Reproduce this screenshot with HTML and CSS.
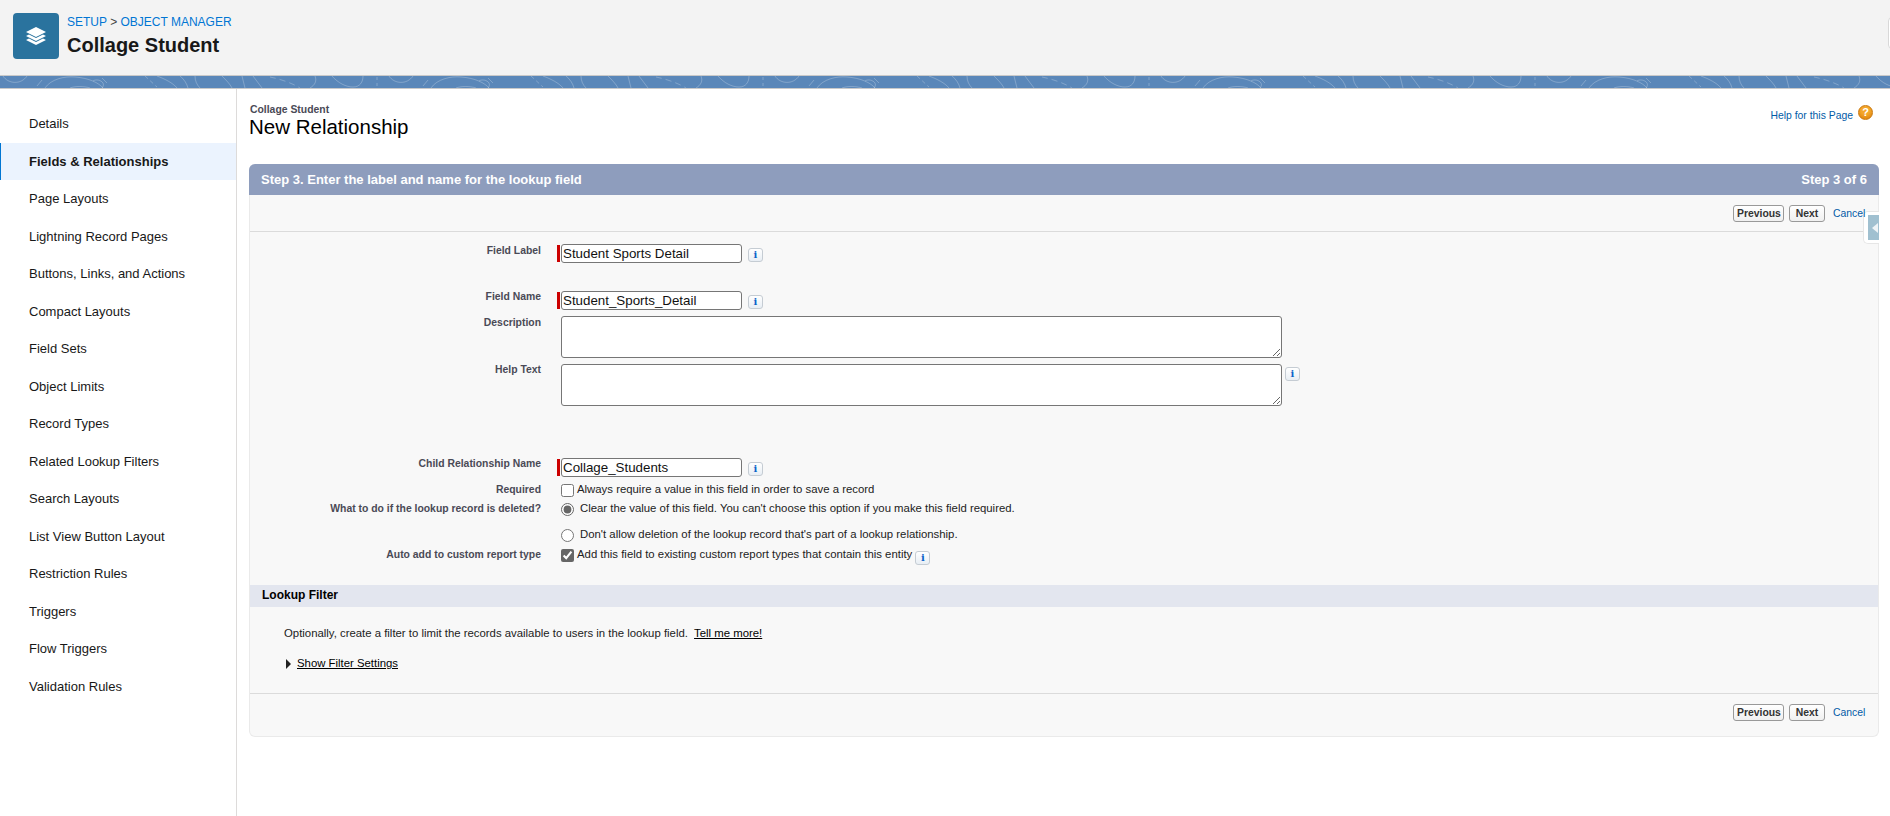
FILE: index.html
```html
<!DOCTYPE html>
<html lang="en">
<head>
<meta charset="utf-8">
<title>New Relationship</title>
<link rel="stylesheet" href="styles.css">
</head>
<body>
<header class="app-header">
  <div class="app-icon">
    <svg viewBox="0 0 20 18" width="20" height="18"><path fill="#fff" d="M10 0 L20 5 L10 10 L0 5 Z"/><path fill="#fff" d="M3 7.4 L0 9 L10 14 L20 9 L17 7.4 L10 11 Z"/><path fill="#fff" d="M3 11.4 L0 13 L10 18 L20 13 L17 11.4 L10 15 Z"/></svg>
  </div>
  <div class="app-titles">
    <div class="crumbs"><a>SETUP</a> &gt; <a>OBJECT MANAGER</a></div>
    <div class="app-title">Collage Student</div>
  </div>
  <div class="header-stub"></div>
</header>
<div class="banner">
  <svg class="banner-art" width="1890" height="12">
    <defs>
      <pattern id="swirl" width="386" height="12" patternUnits="userSpaceOnUse">
        <g fill="none" stroke="#fff" stroke-opacity=".24">
          <path d="M3 0c5 8 18 9 24 0"/>
          <path d="M37 10l5-6"/>
          <path d="M45 12c6-9 20-12 30-11 14 1 24 6 28 11"/>
          <path d="M70 12c5-2 14-2 20 0M93 5c3-2 8-1 10 2 1 2 0 4-1 5"/>
          <path d="M102 2l5 5"/>
          <path d="M145 0l12 11" stroke-dasharray="4 3"/>
          <path d="M157 0c8 3 16 7 20 12"/>
          <path d="M180 0c4 3 7 8 8 12"/>
          <path d="M195 0c0 5 2 9 5 12"/>
          <path d="M222 0c4 4 8 8 10 12"/>
          <path d="M242 0c1 4 2 8 3 12"/>
          <path d="M253 0l9 12"/>
          <path d="M270 1c10 2 22 6 30 11" stroke-dasharray="6 4"/>
          <path d="M315 0c2 5 0 9-5 12"/>
          <path d="M332 0c6 7 14 11 21 11 7 0 10-5 10-11"/>
          <path d="M377 1v11" stroke-dasharray="3 3"/>
        </g>
      </pattern>
    </defs>
    <rect width="1890" height="12" fill="url(#swirl)"/>
  </svg>
</div>
<div class="layout">
  <nav class="sidebar">
    <a class="nav-item">Details</a>
    <a class="nav-item nav-active">Fields &amp; Relationships</a>
    <a class="nav-item">Page Layouts</a>
    <a class="nav-item">Lightning Record Pages</a>
    <a class="nav-item">Buttons, Links, and Actions</a>
    <a class="nav-item">Compact Layouts</a>
    <a class="nav-item">Field Sets</a>
    <a class="nav-item">Object Limits</a>
    <a class="nav-item">Record Types</a>
    <a class="nav-item">Related Lookup Filters</a>
    <a class="nav-item">Search Layouts</a>
    <a class="nav-item">List View Button Layout</a>
    <a class="nav-item">Restriction Rules</a>
    <a class="nav-item">Triggers</a>
    <a class="nav-item">Flow Triggers</a>
    <a class="nav-item">Validation Rules</a>
  </nav>
  <main class="content">
    <div class="page-head">
      <div>
        <div class="page-sub">Collage Student</div>
        <h1 class="page-title">New Relationship</h1>
      </div>
      <a class="help-link">Help for this Page <span class="help-icon">?</span></a>
    </div>
    <section class="panel">
      <div class="panel-head"><span>Step 3. Enter the label and name for the lookup field</span><span>Step 3 of 6</span></div>
      <div class="btn-row btn-row-top">
        <button class="btn">Previous</button><button class="btn">Next</button><a class="cancel">Cancel</a>
        <div class="side-tab"><span class="side-tab-inner"><span class="side-tab-arrow"></span></span></div>
      </div>
      <div class="form">
        <div class="row row-label">
          <div class="lbl lbl-low">Field Label</div>
          <div class="val"><span class="req"></span><input class="inp" type="text" value="Student Sports Detail"><span class="info">i</span></div>
        </div>
        <div class="row row-name">
          <div class="lbl">Field Name</div>
          <div class="val"><span class="req"></span><input class="inp" type="text" value="Student_Sports_Detail"><span class="info">i</span></div>
        </div>
        <div class="row row-desc">
          <div class="lbl lbl-low">Description</div>
          <div class="val"><textarea class="area"></textarea></div>
        </div>
        <div class="row row-help">
          <div class="lbl">Help Text</div>
          <div class="val"><textarea class="area"></textarea><span class="info info-area">i</span></div>
        </div>
        <div class="row row-child">
          <div class="lbl">Child Relationship Name</div>
          <div class="val"><span class="req"></span><input class="inp" type="text" value="Collage_Students"><span class="info">i</span></div>
        </div>
        <div class="row row-required">
          <div class="lbl">Required</div>
          <div class="val val-opt"><input class="chk" type="checkbox"><span class="opt opt-chk">Always require a value in this field in order to save a record</span></div>
        </div>
        <div class="row row-what">
          <div class="lbl">What to do if the lookup record is deleted?</div>
          <div class="val val-opt"><input class="rad" type="radio" name="del" checked><span class="opt">Clear the value of this field. You can't choose this option if you make this field required.</span></div>
        </div>
        <div class="row row-dont">
          <div class="lbl"></div>
          <div class="val val-opt"><input class="rad" type="radio" name="del"><span class="opt">Don't allow deletion of the lookup record that's part of a lookup relationship.</span></div>
        </div>
        <div class="row row-auto">
          <div class="lbl">Auto add to custom report type</div>
          <div class="val val-opt"><input class="chk" type="checkbox" checked><span class="opt opt-chk">Add this field to existing custom report types that contain this entity</span><span class="info info-auto">i</span></div>
        </div>
      </div>
      <h3 class="sub-head">Lookup Filter</h3>
      <div class="filter">
        <p class="filter-note">Optionally, create a filter to limit the records available to users in the lookup field. <a class="ul-link tell">Tell me more!</a></p>
        <div class="filter-toggle"><span class="tri"></span><a class="ul-link">Show Filter Settings</a></div>
      </div>
      <div class="btn-row btn-row-bottom">
        <button class="btn">Previous</button><button class="btn">Next</button><a class="cancel">Cancel</a>
      </div>
    </section>
  </main>
</div>
</body>
</html>
```
FILE: styles.css
```css
* { box-sizing: border-box; }
html, body { margin: 0; height: 100%; overflow: hidden; }
body { font-family: "Liberation Sans", Arial, sans-serif; background: #fff; color: #181818; }
a { text-decoration: none; }

.app-header { position: relative; height: 76px; background: #f3f3f3; border-bottom: 1px solid #c9c9c9; display: flex; align-items: flex-start; padding: 13px 0 0 13px; }
.app-icon { width: 46px; height: 46px; background: #2a739e; border-radius: 4px; display: flex; align-items: center; justify-content: center; }
.app-titles { margin-left: 8px; }
.crumbs { font-size: 12px; line-height: 18px; color: #444; }
.crumbs a { color: #0176d3; }
.app-title { font-size: 20px; font-weight: 700; line-height: 28px; color: #181818; }
.header-stub { position: absolute; left: 1888px; top: 17px; width: 20px; height: 32px; background: #fff; border: 1px solid #d8d8d8; border-radius: 4px; }

.banner { height: 13px; background: #5a87b9; border-bottom: 1px solid #c9c9c9; overflow: hidden; }
.banner-art { display: block; }

.layout { display: flex; height: 727px; }
.sidebar { width: 237px; flex: none; border-right: 1px solid #dddbda; padding-top: 16px; }
.nav-item { display: flex; align-items: center; height: 37.53px; padding-left: 29px; font-size: 13px; color: #181818; }
.nav-active { background: #ebf3fe; font-weight: 700; box-shadow: inset 1px 0 0 #0176d3; }

.content { flex: 1; padding: 0 11px 0 12px; min-width: 0; }
.page-head { height: 75px; display: flex; justify-content: space-between; align-items: flex-start; padding-top: 15px; }
.page-sub { font-size: 10.4px; font-weight: 700; line-height: 12px; color: #4a4a56; padding-left: 1px; }
.page-title { margin: -1px 0 0; font-size: 20.5px; font-weight: 400; line-height: 24px; color: #000; }
.help-link { font-size: 10.4px; color: #015ba7; display: flex; align-items: center; gap: 5px; margin-right: 6px; line-height: 16px; margin-top: 4px; }
.help-icon { width: 15px; height: 15px; border-radius: 50%; background: radial-gradient(circle at 50% 30%, #f4a62a 40%, #d97a06); border: 1px solid #c9780f; color: #fff; font-size: 11px; font-weight: 700; line-height: 13px; text-align: center; margin-top: -7px; }

.panel { position: relative; background: #f8f8f8; border: 1px solid #eaeaea; border-top: 0; border-radius: 6px; height: 573px; }
.panel-head { height: 31px; margin: 0 -1px; background: #8e9dbd; color: #fff; border-radius: 6px 6px 0 0; display: flex; align-items: center; justify-content: space-between; padding: 0 12px; font-size: 13px; font-weight: 700; }

.btn-row { display: flex; align-items: center; justify-content: flex-end; padding-right: 13px; }
.btn-row-top { position: relative; height: 37px; border-bottom: 1px solid #dbdbdb; }
.btn-row-bottom { height: 44px; border-top: 1px solid #dbdbdb; padding-bottom: 6px; }
.btn { height: 17px; padding: 0 3px; margin: 0 0 0 5px; font: 700 10.4px "Liberation Sans", Arial, sans-serif; color: #333; background: linear-gradient(#fff, #f0f0f0); border: 1px solid #999; border-radius: 3px; line-height: 15px; }
.btn:nth-of-type(1) { width: 51px; }
.btn:nth-of-type(2) { width: 36px; }
.cancel { position: relative; z-index: 1; font-size: 10.4px; color: #015ba7; margin-left: 8px; width: 32px; }
.side-tab { position: absolute; right: -1px; top: 16px; width: 16px; height: 33px; background: #fff; border: 1px solid #e6e6e6; border-right: 0; border-radius: 5px 0 0 5px; display: flex; align-items: center; justify-content: flex-end; }
.side-tab-inner { width: 11px; height: 25px; background: #a0c0d0; display: flex; align-items: center; padding-left: 4px; }
.side-tab-arrow { border: 5px solid transparent; border-right: 6px solid #eef3f6; border-left: 0; }

.form { height: 353px; padding-top: 12px; }
.row { display: flex; align-items: flex-start; }
.lbl { width: 291px; flex: none; text-align: right; font-size: 10.4px; font-weight: 700; line-height: 12px; color: #4a4a56; }
.lbl-low { margin-top: 1px; }
.val { position: relative; margin-left: 20px; display: flex; align-items: flex-start; }
.inp { width: 181px; height: 19px; padding: 0 1px; font: 13.33px "Liberation Sans", Arial, sans-serif; color: #111; background: #fff; border: 1px solid #767676; border-radius: 3px; outline: 0; }
.req { position: absolute; left: -4px; top: 1px; width: 3px; height: 17px; background: #c00; }
.area { display: block; width: 721px; height: 42px; margin: 0; background: #fff; border: 1px solid #767676; border-radius: 3px; resize: both; }
.info { width: 15px; height: 14px; margin: 4px 0 0 6px; background: linear-gradient(#fff, #e8eef4); border: 1px solid #c5ccd3; border-radius: 3px; color: #0a63c9; font: 700 10px/12px "DejaVu Serif", serif; text-align: center; flex: none; }
.info-area { margin: 3px 0 0 3px; }
.info-auto { margin: 2px 0 0 3px; }

.row-label { height: 47px; }
.row-name { height: 25px; }
.row-desc { height: 48px; }
.row-help { height: 94px; }
.row-child { height: 26px; }
.row-required { height: 19px; }
.row-what { height: 26px; }
.row-dont { height: 20px; }
.val-opt { align-items: flex-start; }
.chk { width: 13px; height: 13px; margin: 0; flex: none; accent-color: #666; }
.rad { width: 13px; height: 13px; margin: 0; flex: none; accent-color: #666; }
.opt { font-size: 11.36px; line-height: 13px; color: #222; margin: -1px 0 0 6px; }
.opt-chk { margin-left: 3px; }

.sub-head { margin: 0; height: 22px; background: #e3e6ef; padding-left: 12px; font-size: 12px; font-weight: 700; line-height: 21px; color: #000; }
.filter { height: 86px; padding: 20px 0 0 34px; }
.filter-note { margin: 0; font-size: 11.36px; line-height: 13px; color: #222; }
.tell { margin-left: 3px; }
.ul-link { color: #000; text-decoration: underline; }
.filter-toggle { display: flex; align-items: center; margin-top: 17px; font-size: 11.36px; line-height: 13px; padding-left: 2px; }
.tri { border: 5px solid transparent; border-left: 5px solid #222; border-right: 0; margin-right: 6px; }
```
